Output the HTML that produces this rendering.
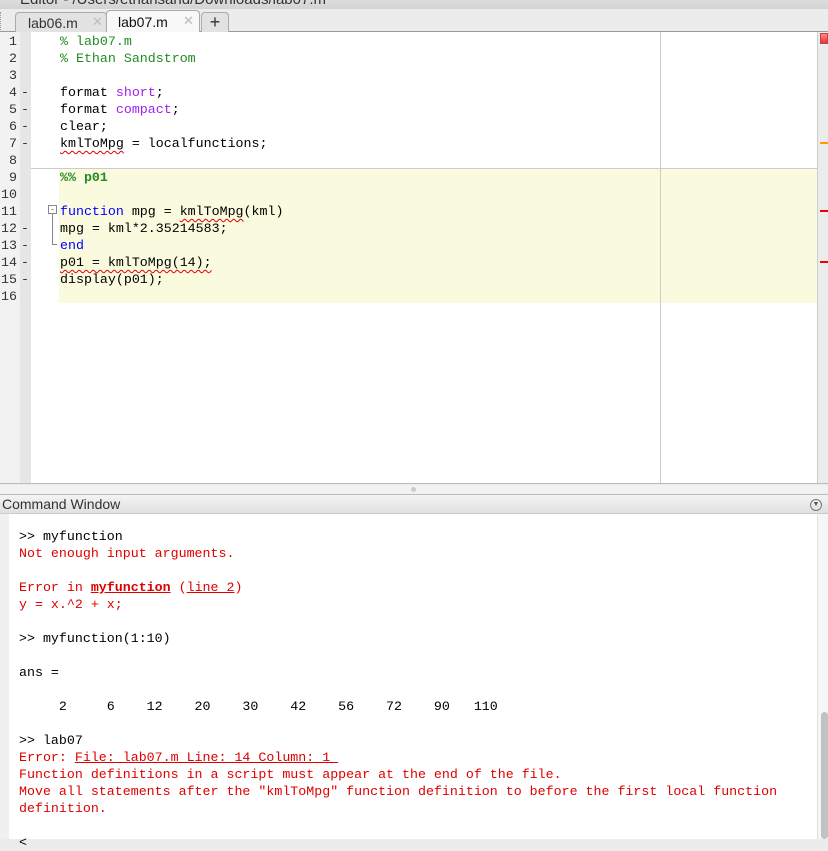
<!DOCTYPE html>
<html><head><style>
*{margin:0;padding:0;box-sizing:border-box}
body{width:828px;height:839px;overflow:hidden;background:#ececec;font-family:"Liberation Sans",sans-serif;position:relative}
.mono{font-family:"Liberation Mono",monospace;font-size:13.3px;white-space:pre;line-height:17px}
.abs{position:absolute}
.g{color:#228b22}.p{color:#a020f0}.b{color:#0000ff}.r{color:#e00000}
.sq{text-decoration:underline wavy #e00000;text-decoration-thickness:1px;text-underline-offset:3px}
.u{text-decoration:underline}
</style></head><body>
<div class="abs" style="left:0;top:0;width:828px;height:9px;background:linear-gradient(#ddd,#d4d4d4);overflow:hidden">
<div class="abs" style="left:20px;top:-9px;font-size:15px;color:#333">Editor - /Users/ethansand/Downloads/lab07.m</div>
</div>
<div class="abs" style="left:0;top:9px;width:828px;height:23px;background:#ececec;border-bottom:1px solid #999"></div>
<div class="abs" style="left:0;top:12px;width:5px;height:18px;border-left:1px dotted #999"></div>
<div class="abs" style="left:15px;top:12px;width:92px;height:20px;background:#e2e2e2;border:1px solid #aaa;border-bottom:none;border-radius:4px 4px 0 0;font-size:14px;color:#333;padding:2px 0 0 12px">lab06.m<span style="position:absolute;left:76px;top:1px;color:#bbb;font-size:13px">✕</span></div>
<div class="abs" style="left:106px;top:10px;width:94px;height:23px;background:#f8f8f8;border:1px solid #aaa;border-bottom:none;border-radius:4px 4px 0 0;font-size:14px;color:#111;padding:3px 0 0 11px">lab07.m<span style="position:absolute;left:76px;top:2px;color:#bbb;font-size:13px">✕</span></div>
<div class="abs" style="left:201px;top:12px;width:28px;height:20px;background:#e2e2e2;border:1px solid #aaa;border-bottom:none;border-radius:4px 4px 0 0;font-size:18px;text-align:center;line-height:18px;color:#333">+</div>
<div class="abs" style="left:0;top:32px;width:828px;height:451px;background:#fff"></div>
<div class="abs" style="left:0;top:32px;width:20px;height:451px;background:#f2f2f2"></div>
<div class="abs" style="left:20px;top:32px;width:11px;height:451px;background:#e6e6e6"></div>
<div class="abs" style="left:31px;top:168px;width:786px;height:1px;background:#ccc"></div>
<div class="abs" style="left:59px;top:169px;width:758px;height:134px;background:#fafadf"></div>
<div class="abs" style="left:660px;top:32px;width:1px;height:451px;background:#ccc"></div>
<div class="abs" style="left:817px;top:32px;width:11px;height:451px;background:#ececec;border-left:1px solid #ccc"></div>
<div class="abs" style="left:820px;top:33px;width:8px;height:11px;background:linear-gradient(#f88,#e33);border:1px solid #b44"></div>
<div class="abs" style="left:820px;top:142px;width:8px;height:2px;background:#f90"></div>
<div class="abs" style="left:820px;top:210px;width:8px;height:2px;background:#e00"></div>
<div class="abs" style="left:820px;top:261px;width:8px;height:2px;background:#e00"></div>
<div class="abs mono" style="left:0;top:33px;width:17px;text-align:right;color:#333">1
2
3
4
5
6
7
8
9
10
11
12
13
14
15
16</div>
<div class="abs mono" style="left:21px;top:33px;color:#333">


-
-
-
-




-
-
-
-</div>
<div class="abs" style="left:48px;top:205px;width:9px;height:9px;border:1px solid #888;background:#fff;font-size:9px;line-height:6px;text-align:center;color:#666">-</div>
<div class="abs" style="left:52px;top:214px;width:5px;height:31px;border-left:1px solid #888;border-bottom:1px solid #888"></div>
<div class="abs mono" style="left:60px;top:33px;color:#000"><span class="g">% lab07.m</span>
<span class="g">% Ethan Sandstrom</span>

format <span class="p">short</span>;
format <span class="p">compact</span>;
clear;
<span class="sq">kmlToMpg</span> = localfunctions;

<span class="g" style="font-weight:bold">%% p01</span>

<span class="b">function</span> mpg = <span class="sq">kmlToMpg</span>(kml)
mpg = kml*2.35214583;
<span class="b">end</span>
<span class="sq">p01 = kmlToMpg(14);</span>
display(p01);</div>
<div class="abs" style="left:0;top:483px;width:828px;height:1px;background:#bbb"></div>
<div class="abs" style="left:0;top:485px;width:828px;height:10px;background:#f2f2f2;border-bottom:1px solid #bbb"></div>
<div class="abs" style="left:411px;top:487px;width:5px;height:5px;border-radius:50%;background:#ccc"></div>
<div class="abs" style="left:0;top:495px;width:828px;height:19px;background:linear-gradient(#f4f4f4,#e0e0e0);border-bottom:1px solid #ccc;font-size:14px;color:#333;padding:1px 0 0 2px">Command Window</div>
<div class="abs" style="left:810px;top:499px;width:12px;height:12px;border:1px solid #777;border-radius:50%;font-size:7px;text-align:center;line-height:10px;color:#555">▼</div>
<div class="abs" style="left:0;top:514px;width:828px;height:325px;background:#fff"></div>
<div class="abs" style="left:0;top:514px;width:9px;height:325px;background:#f0f0f0"></div>
<div class="abs" style="left:817px;top:514px;width:11px;height:325px;background:#f6f6f6;border-left:1px solid #e0e0e0"></div>
<div class="abs" style="left:821px;top:712px;width:7px;height:127px;background:#c2c2c2;border-radius:4px"></div>
<div class="abs mono" style="left:19px;top:528px;color:#000">&gt;&gt; myfunction
<span class="r">Not enough input arguments.</span>

<span class="r">Error in <b class="u">myfunction</b> (<span class="u">line 2</span>)</span>
<span class="r">y = x.^2 + x;</span>

&gt;&gt; myfunction(1:10)

ans =

     2     6    12    20    30    42    56    72    90   110

&gt;&gt; lab07
<span class="r">Error: <span class="u">File: lab07.m Line: 14 Column: 1 </span></span>
<span class="r">Function definitions in a script must appear at the end of the file.</span>
<span class="r">Move all statements after the "kmlToMpg" function definition to before the first local function</span>
<span class="r">definition.</span>

&lt;</div>
</body></html>
